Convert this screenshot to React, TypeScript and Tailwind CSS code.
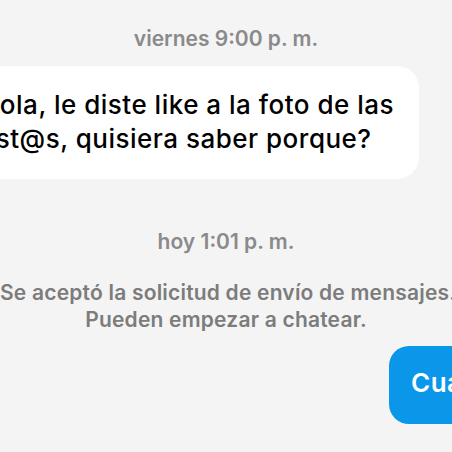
const font = { fontFamily: "Inter, 'Noto Sans', sans-serif" };

export default function App() {
  return (
    <div
      className="w-[452px] h-[452px] overflow-hidden bg-[#f4f4f4] flex flex-col"
      style={font}
    >
      {/* timestamp */}
      <div className="pt-[26px] text-center text-[21px] leading-[26px] font-semibold text-[#8a8a8a]">
        viernes 9:00 p. m.
      </div>

      {/* incoming message */}
      <div className="mt-[14px] flex">
        <div className="ml-[-37px] w-[456px] shrink-0 rounded-[22px] bg-white pl-[17px] pt-[22px] pb-[23px]">
          <p className="whitespace-nowrap text-[26px] leading-[34px] font-medium tracking-[0.5px] text-black">
            Hola, le diste like a la foto de las
            <br />
            est@s, quisiera saber porque?
          </p>
        </div>
      </div>

      {/* second timestamp */}
      <div className="mt-[50px] text-center text-[21px] leading-[26px] font-semibold text-[#8a8a8a]">
        hoy 1:01 p. m.
      </div>

      {/* system notice */}
      <div className="mt-[24px] text-center text-[21px] leading-[27px] font-semibold tracking-[0.2px] text-[#7c7c7c] whitespace-nowrap">
        Se aceptó la solicitud de envío de mensajes.
        <br />
        Pueden empezar a chatear.
      </div>

      {/* outgoing message */}
      <div className="mt-[13px] flex justify-end">
        <div className="mr-[-120px] w-[183px] shrink-0 rounded-[20px] bg-[#0a97ea] pl-[22px] pt-[20px] pb-[24px]">
          <span className="block whitespace-nowrap text-[26px] leading-[34px] font-semibold tracking-[0.5px] text-white">
            Cuando
          </span>
        </div>
      </div>
    </div>
  );
}
